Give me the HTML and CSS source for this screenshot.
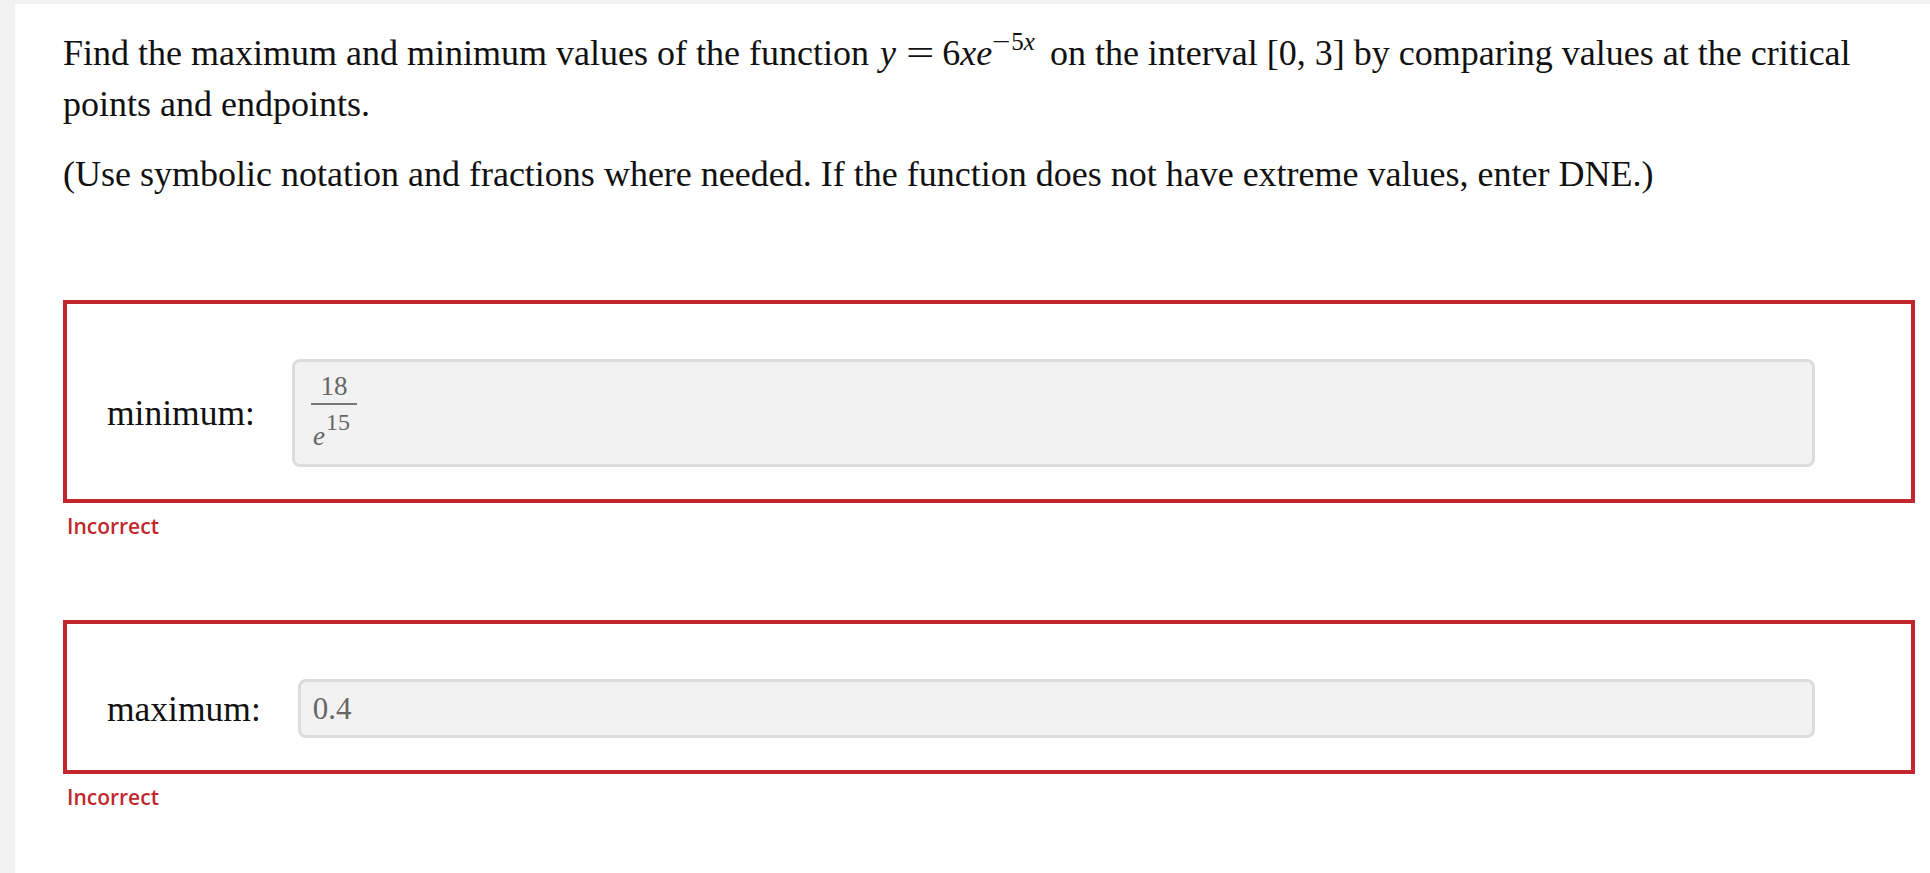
FILE: index.html
```html
<!DOCTYPE html>
<html lang="en">
<head>
<meta charset="utf-8">
<title>Extreme values</title>
<link rel="stylesheet" href="styles.css">
</head>
<body>
<div class="panel">
  <p class="question">Find the maximum and minimum values of the function <span class="math"><i>y</i><span class="op">=</span>6<i>x</i><i>e</i><sup class="exp"><span class="minus">−</span>5<i>x</i></sup></span> on the interval [0, 3] by comparing values at the critical points and endpoints.</p>
  <p class="question note">(Use symbolic notation and fractions where needed. If the function does not have extreme values, enter DNE.)</p>

  <div class="answer first">
    <div class="box">
      <span class="label">minimum:</span>
      <div class="field tall">
        <span class="frac">
          <span class="num">18</span>
          <span class="bar"></span>
          <span class="den"><i>e</i><sup>15</sup></span>
        </span>
      </div>
    </div>
    <div class="feedback">Incorrect</div>
  </div>

  <div class="answer second">
    <div class="box">
      <span class="label">maximum:</span>
      <div class="field short"><span class="value">0.4</span></div>
    </div>
    <div class="feedback">Incorrect</div>
  </div>
</div>
</body>
</html>
```

FILE: styles.css
```css
html, body {
  margin: 0;
  padding: 0;
  background: #f2f2f2;
  height: 100%;
}

.panel {
  margin: 4px 0 0 15px;
  background: #ffffff;
  min-height: calc(100% - 4px);
  box-sizing: border-box;
  padding: 24px 15px 0 48px;
}

.question {
  margin: 0;
  font-family: "Liberation Serif", "Times New Roman", serif;
  font-size: 36px;
  line-height: 51px;
  color: #111;
}

.question .math {
  margin-left: 2px;
}

.question .math i {
  font-style: italic;
}

.question .op {
  display: inline-block;
  margin: 0 12px 0 14px;
  transform: scaleX(1.4);
}

.question .exp {
  font-size: 25px;
  line-height: 0;
  vertical-align: 15px;
  margin-left: 1px;
  margin-right: 6px;
}

.question .minus {
  margin: 0 3px 0 1px;
  display: inline-block;
  transform: scaleX(1.3);
}

.note {
  margin-top: 19px;
}

.answer.first {
  margin-top: 100px;
}

.answer.second {
  margin-top: 80px;
}

.box {
  border: 4px solid #c1272d;
  padding: 55px 96px 32px 40px;
  display: flex;
  align-items: center;
  gap: 37px;
}

.label {
  font-family: "Liberation Serif", "Times New Roman", serif;
  font-size: 35.5px;
  color: #111;
  white-space: nowrap;
}

.field {
  flex: 1;
  background: #f2f2f2;
  border: 3px solid #dcdcdc;
  border-radius: 8px;
  box-sizing: border-box;
  display: flex;
  align-items: center;
  padding-left: 12px;
  font-family: "Liberation Serif", "Times New Roman", serif;
  color: #666;
}

.field.tall {
  height: 108px;
}

.field.short {
  height: 59px;
}

.value {
  font-size: 31px;
}

.frac {
  display: inline-flex;
  flex-direction: column;
  align-items: center;
  margin-left: 4px;
  padding-bottom: 3px;
}

.num {
  font-size: 27px;
  line-height: 27px;
  padding-bottom: 3px;
}

.bar {
  align-self: stretch;
  height: 2px;
  background: #777;
}

.den {
  font-size: 27px;
  line-height: 30px;
  padding: 16px 7px 0 2px;
}

.den sup {
  font-size: 24px;
  line-height: 0;
  vertical-align: 15px;
  margin-left: 1px;
}

.feedback {
  margin-top: 9px;
  padding-left: 4px;
  font-family: "Open Sans", "Liberation Sans", sans-serif;
  font-weight: 600;
  font-size: 21px;
  line-height: 28px;
  color: #c1272d;
}
```
